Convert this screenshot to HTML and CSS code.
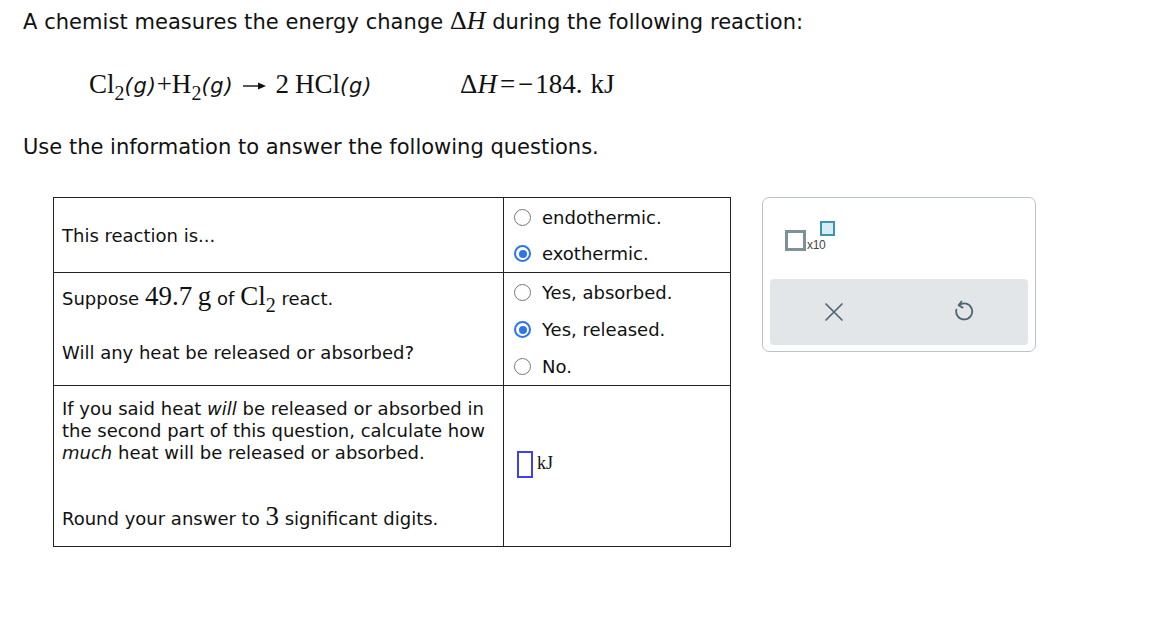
FILE: index.html
```html
<!DOCTYPE html>
<html>
<head>
<meta charset="utf-8">
<link rel="stylesheet" href="styles.css">
</head>
<body>
<div class="page">
  <p class="intro">A chemist measures the energy change <span class="mi"><span class="up">Δ</span><i>H</i></span> during the following reaction:</p>
  <div class="equation">
    <span class="rxn"><span class="m">Cl</span><sub class="m">2</sub><span class="ph">(g)</span><span class="m">+H</span><sub class="m">2</sub><span class="ph">(g)</span><svg class="arrow" width="24" height="10" viewBox="0 0 24 10"><path d="M0 5 H17" stroke="#111" stroke-width="1.4"/><path d="M15 1.5 L23 5 L15 8.5 Z" fill="#111"/></svg><span class="m two">2</span><span class="m">HCl</span><span class="ph">(g)</span></span>
    <span class="dh m"><span>Δ</span><i>H</i><span class="rel">=</span><span>−</span><span class="val">184.</span><span class="kj">kJ</span></span>
  </div>
  <p class="use">Use the information to answer the following questions.</p>

  <div class="work">
    <div class="qtable">
      <div class="cell q row1">This reaction is...</div>
      <div class="cell a row1">
        <label class="opt"><span class="radio"></span>endothermic.</label>
        <label class="opt"><span class="radio on"></span>exothermic.</label>
      </div>
      <div class="cell q row2">
        <div class="line">Suppose <span class="num">49.7</span> <span class="num">g</span> of <span class="num">Cl<sub>2</sub></span> react.</div>
        <div class="line l2">Will any heat be released or absorbed?</div>
      </div>
      <div class="cell a row2">
        <label class="opt"><span class="radio"></span>Yes, absorbed.</label>
        <label class="opt"><span class="radio on"></span>Yes, released.</label>
        <label class="opt"><span class="radio"></span>No.</label>
      </div>
      <div class="cell q row3">
        <div class="para">If you said heat <i>will</i> be released or absorbed in the second part of this question, calculate how <i>much</i> heat will be released or absorbed.</div>
        <div class="round">Round your answer to <span class="num">3</span> significant digits.</div>
      </div>
      <div class="cell a row3 answer">
        <span class="inbox"></span><span class="unit">kJ</span>
      </div>
    </div>

    <div class="panel">
      <div class="tools">
        <span class="base"></span><span class="x10">x10</span><span class="sup"></span>
      </div>
      <div class="actions">
        <svg class="ic" width="20" height="20" viewBox="0 0 20 20"><path d="M2 2 L18 18 M18 2 L2 18" stroke="#4f6672" stroke-width="1.7" fill="none" stroke-linecap="round"/></svg>
        <svg class="ic" width="22" height="24" viewBox="0 0 22 24"><path d="M7.2 5.2 A8 8 0 1 1 4.4 9.6" stroke="#4f6672" stroke-width="1.8" fill="none" stroke-linecap="round"/><path d="M9.5 1.5 L6.6 5.3 L10.6 7.6" stroke="#4f6672" stroke-width="1.8" fill="none" stroke-linecap="round" stroke-linejoin="round"/></svg>
      </div>
    </div>
  </div>
</div>
</body>
</html>
```
FILE: styles.css
```css
html, body { margin: 0; padding: 0; background: #fff; }
body {
  font-family: "DejaVu Sans", Verdana, sans-serif;
  color: #111;
  font-size: 18px;
}
.page { padding: 8px 0 0 23px; }
p { margin: 0; }
.intro { font-size: 21px; line-height: 26px; letter-spacing: 0.05px; }
.mi { font-family: "Liberation Serif", serif; font-size: 26px; letter-spacing: 0; }
.up { font-style: normal; }
.equation {
  display: flex;
  margin: 29px 0 0 66px;
  height: 40px;
  align-items: center;
  font-size: 27px;
}
.m { font-family: "Liberation Serif", serif; }
.ph { font-family: "DejaVu Sans", sans-serif; font-style: italic; font-size: 21px; letter-spacing: 0.8px; }
sub.m { font-size: 20px; vertical-align: -7px; line-height: 0; }
.arrow { margin: 0 9px 0 9px; vertical-align: 2px; }
.two { margin-right: 6px; }
.rxn { width: 371px; white-space: nowrap; }
.dh { white-space: nowrap; }
.rel { margin: 0 3px; }
.val { margin-left: 2px; }
.kj { margin-left: 8px; }
.use { font-size: 21px; line-height: 26px; margin-top: 30px; }

.work { display: flex; align-items: flex-start; margin-top: 37px; margin-left: 30px; }
.qtable {
  display: grid;
  grid-template-columns: 450px 227px;
  grid-template-rows: 75px 113px 161px;
  border-top: 1px solid #222;
  border-left: 1px solid #222;
  width: 677px;
}
.cell { border-right: 1px solid #222; border-bottom: 1px solid #222; }
.q { padding: 0 8px; }
.row1.q { display: flex; align-items: center; padding-top: 1px; }
.a { display: flex; flex-direction: column; padding: 1px 0 0 10px; }
.opt { display: flex; align-items: center; height: 37.5px; }
.radio {
  width: 17px; height: 17px; border: 1.5px solid #777; border-radius: 50%;
  margin-right: 11px; box-sizing: border-box; flex: none; position: relative;
}
.radio.on { border: 2px solid #2f75e8; }
.radio.on::after {
  content: ""; position: absolute; left: 2.5px; top: 2.5px; width: 8px; height: 8px;
  border-radius: 50%; background: #2f75e8;
}
.row2.q { padding-top: 7px; }
.line { line-height: 32px; white-space: nowrap; }
.num { font-family: "Liberation Serif", serif; font-size: 27px; }
.num sub { font-size: 20px; vertical-align: -7px; line-height: 0; }
.l2 { margin-top: 22px; }
.row3.q { padding-top: 12px; }
.para { line-height: 22px; width: 434px; }
.round { margin-top: 36px; line-height: 32px; white-space: nowrap; }
.answer { flex-direction: row; align-items: center; padding: 0 0 0 13px; }
.inbox { width: 16px; height: 27px; border: 2px solid #4040ee; box-sizing: border-box; margin-right: 4px; margin-top: -4px; }
.unit { font-family: "Liberation Serif", serif; font-size: 18px; margin-top: -6px; }

.panel {
  margin-left: 31px;
  width: 274px;
  height: 155px;
  box-sizing: border-box;
  border: 1px solid #b9c3c8;
  border-radius: 7px;
  padding: 0 7px 6px 7px;
  display: flex; flex-direction: column;
}
.tools { height: 81px; display: flex; align-items: flex-start; padding-left: 15px; }
.base { width: 21px; height: 21px; border: 3px solid #7d9198; box-sizing: border-box; margin-top: 32px; }
.x10 { font-family: "Liberation Sans", Arial, sans-serif; font-size: 12px; color: #444; margin-top: 40px; margin-left: 1px; letter-spacing: -0.3px; }
.sup { width: 15px; height: 15px; border: 2px solid #3e94a8; background: #d4ecf3; box-sizing: border-box; margin-top: 23px; margin-left: -5px; }
.actions {
  flex: 1; background: #e2e6e9; border-radius: 4px;
  display: flex; align-items: center; justify-content: space-around;
}
.ic { display: block; }
```
